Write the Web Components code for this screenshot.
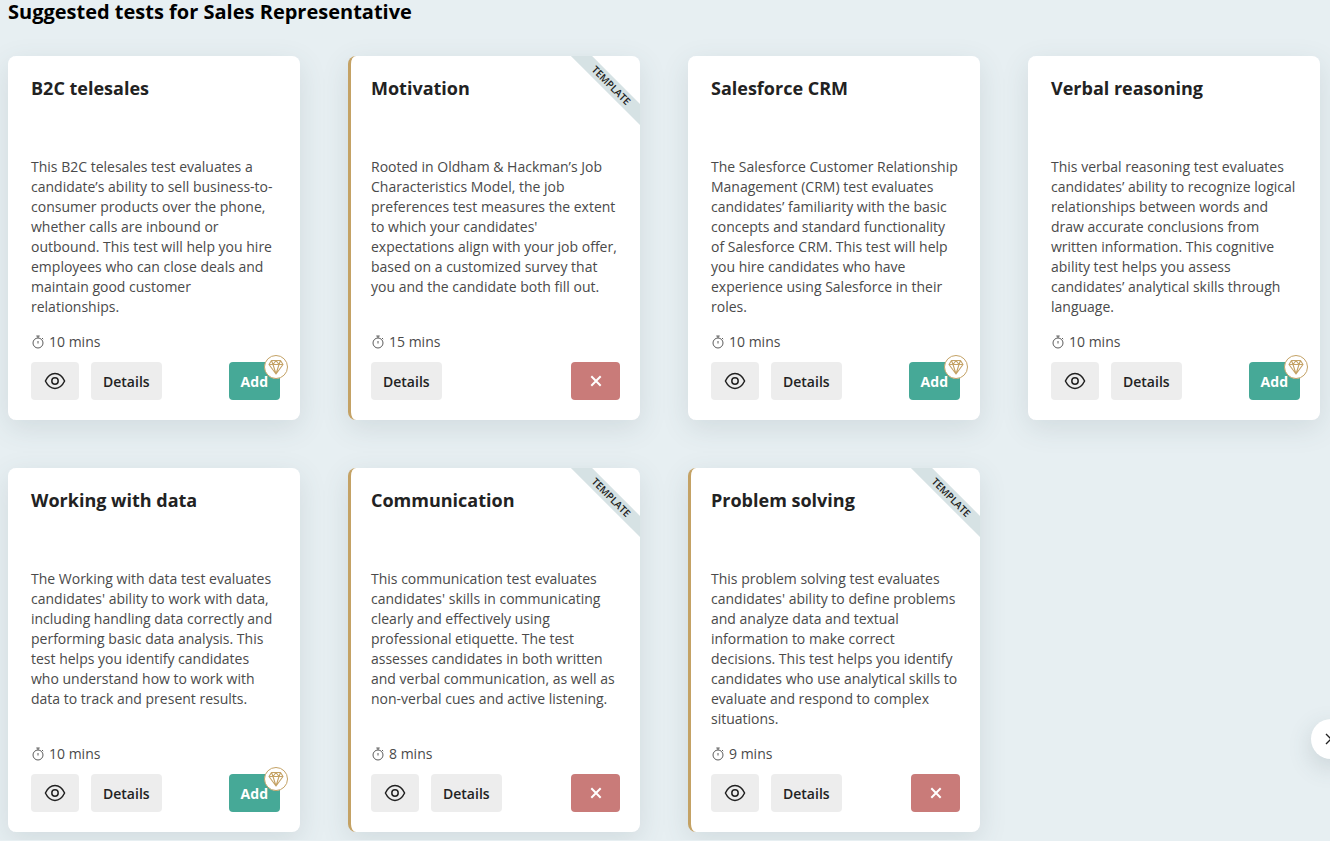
<!DOCTYPE html>
<html lang="en">
<head>
  <meta charset="UTF-8">
  <meta name="viewport" content="width=device-width, initial-scale=1.0">
  <title>Suggested tests</title>
  <style>
    body {
      margin: 0;
      background-color: #e7eff2;
      color: #222;
      font-family: 'Open Sans', sans-serif;
      font-size: 14px;
      line-height: 20px;
    }
  </style>
</head>
<body>
  <test-list heading="Suggested tests for Sales Representative">
    <test-card name="B2C telesales" minutes="10" preview premium>This B2C telesales test evaluates a candidate’s ability to sell business-to-consumer products over the phone, whether calls are inbound or outbound. This test will help you hire employees who can close deals and maintain good customer relationships.</test-card>
    <test-card name="Motivation" minutes="15" template added>Rooted in Oldham &amp; Hackman’s Job Characteristics Model, the job preferences test measures the extent to which your candidates' expectations align with your job offer, based on a customized survey that you and the candidate both fill out.</test-card>
    <test-card name="Salesforce CRM" minutes="10" preview premium>The Salesforce Customer Relationship Management (CRM) test evaluates candidates’ familiarity with the basic concepts and standard functionality of Salesforce CRM. This test will help you hire candidates who have experience using Salesforce in their roles.</test-card>
    <test-card name="Verbal reasoning" minutes="10" preview premium>This verbal reasoning test evaluates candidates’ ability to recognize logical relationships between words and draw accurate conclusions from written information. This cognitive ability test helps you assess candidates’ analytical skills through language.</test-card>
    <test-card name="Working with data" minutes="10" preview premium>The Working with data test evaluates candidates' ability to work with data, including handling data correctly and performing basic data analysis. This test helps you identify candidates who understand how to work with data to track and present results.</test-card>
    <test-card name="Communication" minutes="8" preview template added>This communication test evaluates candidates' skills in communicating clearly and effectively using professional etiquette. The test assesses candidates in both written and verbal communication, as well as non-verbal cues and active listening.</test-card>
    <test-card name="Problem solving" minutes="9" preview template added>This problem solving test evaluates candidates' ability to define problems and analyze data and textual information to make correct decisions. This test helps you identify candidates who use analytical skills to evaluate and respond to complex situations.</test-card>
  </test-list>
  <next-button></next-button>

  <script>
    const icons = {
      clock: `
        <svg width="14" height="14" viewBox="0 0 14 14" fill="none" stroke="currentColor" stroke-width="0.9">
          <circle cx="7" cy="8" r="5" />
          <path d="M5.3 1h3.4M7 1v2M11 3l1.2 1.2M7 6v2.5" />
        </svg>`,
      eye: `
        <svg width="22" height="18" viewBox="0 0 22 18" fill="none" stroke="currentColor" stroke-width="1.5">
          <path d="M1.4 9C3.8 4 7 1.6 11 1.6S18.2 4 20.6 9C18.2 14 15 16.4 11 16.4S3.8 14 1.4 9Z" stroke-linejoin="round" />
          <circle cx="11" cy="9" r="3.2" />
        </svg>`,
      cross: `
        <svg width="12" height="12" viewBox="0 0 12 12" fill="none" stroke="currentColor" stroke-width="2">
          <path d="M1.3 1.3l9.4 9.4M10.7 1.3l-9.4 9.4" />
        </svg>`,
      diamond: `
        <svg width="16" height="16" viewBox="0 0 16 16" fill="none" stroke="currentColor" stroke-width="1.1" stroke-linejoin="round">
          <path d="M3.5 1.5h9L15 5.5 8 15 1 5.5ZM1 5.5h14M3.5 1.5l1.5 4L8 15l3-9.5 1.5-4M5 5.5l3-4 3 4" />
        </svg>`,
      chevron: `
        <svg width="12" height="12" viewBox="0 0 12 12" fill="none" stroke="currentColor" stroke-width="1.4">
          <path d="M1 1l5 5-5 5" />
        </svg>`,
    };

    class TestList extends HTMLElement {
      constructor() {
        super();
        this.shadowDOM = this.attachShadow({ mode: 'open' });
      }

      connectedCallback() {
        this.render();
      }

      render() {
        this.shadowDOM.innerHTML = `
          <style>
            :host {
              display: block;
              padding: 0 10px 8px 8px;
            }

            h2 {
              margin: 0 0 32px;
              font-size: 20px;
              line-height: 24px;
              font-weight: 700;
              color: #000;
            }

            .grid {
              display: grid;
              grid-template-columns: repeat(auto-fill, minmax(264px, 1fr));
              gap: 48px;
            }
          </style>

          <h2>${this.getAttribute('heading')}</h2>
          <div class="grid"><slot></slot></div>
        `;
      }
    }

    customElements.define('test-list', TestList);

    class TestCard extends HTMLElement {
      constructor() {
        super();
        this.shadowDOM = this.attachShadow({ mode: 'open' });
      }

      connectedCallback() {
        this.render();
      }

      render() {
        const name = this.getAttribute('name');
        const action = this.hasAttribute('added')
          ? `<button class="remove" aria-label="Remove ${name}">${icons.cross}</button>`
          : '<button class="add">Add</button>';

        this.shadowDOM.innerHTML = `
          <style>
            :host {
              box-sizing: border-box;
              display: flex;
              flex-direction: column;
              position: relative;
              overflow: hidden;
              padding: 20px;
              border-left: 3px solid #fff;
              border-radius: 8px;
              background-color: #fff;
              box-shadow: 0 8px 28px rgba(60, 85, 90, 0.13);
            }

            :host([template]) {
              border-left-color: #c4a265;
            }

            h3 {
              margin: 0 0 57px;
              font-size: 18px;
              line-height: 24px;
              font-weight: 700;
            }

            p {
              flex: 1;
              margin: 0 0 15px;
              min-height: 160px;
              color: #4a4a4a;
            }

            .time {
              display: flex;
              align-items: center;
              gap: 4px;
              margin-bottom: 10px;
              color: #4a4a4a;
            }

            .actions {
              display: flex;
              gap: 12px;
            }

            .main-action {
              position: relative;
              display: flex;
              margin-left: auto;
            }

            button {
              display: flex;
              align-items: center;
              justify-content: center;
              height: 38px;
              padding: 0 12px;
              border: 0;
              border-radius: 4px;
              background-color: #ededed;
              color: #222;
              font-family: inherit;
              font-size: 14px;
              font-weight: 600;
              cursor: pointer;
            }

            .preview {
              width: 48px;
            }

            .add {
              background-color: #46a997;
              color: #fff;
              font-weight: 700;
            }

            .remove {
              width: 49px;
              background-color: #c97b79;
              color: #fff;
            }

            .badge {
              box-sizing: border-box;
              position: absolute;
              top: -7px;
              right: -8px;
              display: grid;
              place-items: center;
              width: 24px;
              height: 24px;
              border: 1px solid #c4a265;
              border-radius: 50%;
              background-color: #fff;
              color: #c4a265;
            }

            .ribbon {
              position: absolute;
              top: 22px;
              right: -26px;
              width: 110px;
              transform: rotate(45deg);
              background-color: #d6e2e4;
              font-size: 10px;
              line-height: 15px;
              font-weight: 600;
              text-align: center;
            }
          </style>

          <h3>${name}</h3>
          <p><slot></slot></p>
          <div class="time">${icons.clock}<span>${this.getAttribute('minutes')} mins</span></div>
          <div class="actions">
            ${this.hasAttribute('preview') ? `<button class="preview" aria-label="Preview ${name}">${icons.eye}</button>` : ''}
            <button>Details</button>
            <div class="main-action">
              ${action}
              ${this.hasAttribute('premium') ? `<span class="badge">${icons.diamond}</span>` : ''}
            </div>
          </div>
          ${this.hasAttribute('template') ? '<span class="ribbon">TEMPLATE</span>' : ''}
        `;
      }
    }

    customElements.define('test-card', TestCard);

    class NextButton extends HTMLElement {
      constructor() {
        super();
        this.shadowDOM = this.attachShadow({ mode: 'open' });
      }

      connectedCallback() {
        this.render();
      }

      render() {
        this.shadowDOM.innerHTML = `
          <style>
            /* Hangs half over the right edge of the window */
            :host {
              position: fixed;
              right: -21px;
              bottom: 82px;
            }

            button {
              display: grid;
              place-items: center;
              width: 40px;
              height: 40px;
              padding: 0;
              border: 0;
              border-radius: 50%;
              background-color: #fff;
              color: #222;
              box-shadow: 0 8px 24px rgba(60, 85, 90, 0.18);
              cursor: pointer;
            }
          </style>

          <button aria-label="Next">${icons.chevron}</button>
        `;
      }
    }

    customElements.define('next-button', NextButton);
  </script>
</body>
</html>
